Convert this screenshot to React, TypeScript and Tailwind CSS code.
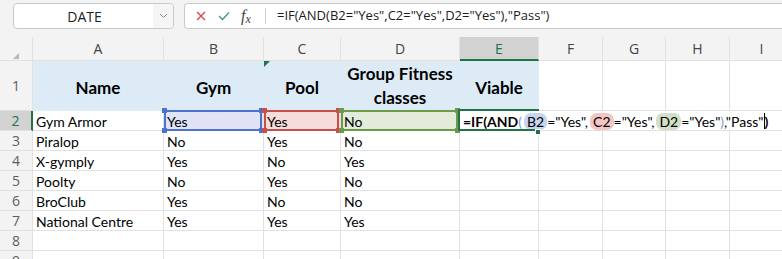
import React from "react";

const COLS = ["A", "B", "C", "D", "E", "F", "G", "H", "I"];

const data: string[][] = [
  ["Piralop", "No", "Yes", "No"],
  ["X-gymply", "Yes", "No", "Yes"],
  ["Poolty", "No", "Yes", "No"],
  ["BroClub", "Yes", "No", "No"],
  ["National Centre", "Yes", "Yes", "Yes"],
  ["", "", "", ""],
  ["", "", "", ""],
];

function RangeBox({ color }: { color: string }) {
  return (
    <div className="absolute left-0 top-[-1px] right-[1px] bottom-[-1px] z-10 pointer-events-none">
      <div className="absolute inset-0 border-2" style={{ borderColor: color }} />
      <div className="absolute left-[-2px] top-[-2px] w-[5px] h-[5px]" style={{ background: color }} />
      <div className="absolute right-[-2px] top-[-2px] w-[5px] h-[5px]" style={{ background: color }} />
      <div className="absolute left-[-2px] bottom-[-2px] w-[5px] h-[5px]" style={{ background: color }} />
      <div className="absolute right-[-2px] bottom-[-2px] w-[5px] h-[5px]" style={{ background: color }} />
    </div>
  );
}

const cell = "border-r border-b border-[#e1e1e1] bg-white flex items-center pl-[3px] pt-[1px] text-[14px] text-black whitespace-nowrap overflow-hidden";
const rowHdr = "border-r border-b border-[#e1e1e1] bg-[#f3f3f3] flex items-center justify-center text-[14px] text-[#5e5e5e]";
const hdr = "bg-[#ddebf7] border-r border-b border-[#ddebf7] flex items-center justify-center pt-[4px] font-bold text-[17px] text-black";
const pill = "inline-block h-[17px] leading-[17px] px-[3px] rounded-[7px]";

export default function App() {
  return (
    <div className="w-[782px] h-[259px] overflow-hidden bg-[#f3f3f3] font-['Lato',sans-serif]">
      {/* Top bar */}
      <div className="h-[37px] flex pt-[3px] font-['Open_Sans',sans-serif]">
        <div className="shrink-0 ml-[13px] w-[161px] h-[26px] rounded-[4px] border border-[#c9c9c9] bg-white flex overflow-hidden">
          <div className="flex-1 flex items-center justify-center text-[14px] text-[#222] pl-[2px]">DATE</div>
          <div className="w-[20px] bg-[#f5f5f5] flex items-center justify-center">
            <svg width="9" height="6" viewBox="0 0 9 6">
              <path d="M1 1 L4.5 4.5 L8 1" stroke="#8a8a8a" strokeWidth="1" fill="none" />
            </svg>
          </div>
        </div>
        <div className="shrink-0 ml-[10px] w-[620px] h-[26px] rounded-l-[4px] border border-r-0 border-[#c9c9c9] bg-white flex items-center">
          <div className="w-[31px] flex justify-center pl-[1px]">
            <svg width="10" height="10" viewBox="0 0 10 10">
              <path d="M1 1 L9 9 M9 1 L1 9" stroke="#d6424e" strokeWidth="1.3" fill="none" />
            </svg>
          </div>
          <div className="w-[15px] flex justify-center">
            <svg width="12" height="10" viewBox="0 0 12 10">
              <path d="M1 5 L4.5 8.5 L11 1.5" stroke="#3d9a62" strokeWidth="1.3" fill="none" />
            </svg>
          </div>
          <div className="w-[30px] flex justify-center items-center font-['Liberation_Serif',serif] italic text-[#444] text-[16px] leading-none">
            <span>f</span>
            <span className="text-[12px] mt-[6px]">x</span>
          </div>
          <div className="w-px h-[16px] bg-[#d0d0d0] ml-[4px]" />
          <div className="pl-[11px] text-[13px] text-[#1b1b1b] whitespace-nowrap">=IF(AND(B2="Yes",C2="Yes",D2="Yes"),"Pass")</div>
        </div>
      </div>

      {/* Sheet grid */}
      <div className="grid grid-cols-[33px_131px_100px_77px_119px_79px_64px_63px_64px_64px] grid-rows-[24px_50px_repeat(8,20px)]">
        {/* column headers */}
        <div className="border-r border-b border-[#e1e1e1] bg-[#f3f3f3] relative">
          <div className="absolute right-[13px] bottom-[1px] w-0 h-0 border-l-[6px] border-l-transparent border-b-[6px] border-b-[#b8b8b8]" />
        </div>
        {COLS.map((c) =>
          c === "E" ? (
            <div key={c} className="border-r border-[#e1e1e1] bg-[#d2d2d2] border-b-2 border-b-[#217346] flex items-center justify-center text-[14px] text-[#217346] font-['Open_Sans',sans-serif]">
              {c}
            </div>
          ) : (
            <div key={c} className="border-r border-b border-[#e1e1e1] bg-[#f3f3f3] flex items-center justify-center text-[14px] text-[#444] font-['Open_Sans',sans-serif]">
              {c}
            </div>
          )
        )}

        {/* Row 1 */}
        <div className={rowHdr + " font-['Open_Sans',sans-serif]"}>1</div>
        <div className={hdr}>Name</div>
        <div className={hdr}>Gym</div>
        <div className={hdr + " relative"}>
          <div className="absolute left-0 top-0 w-0 h-0 border-t-[6px] border-t-[#217346] border-r-[6px] border-r-transparent" />
          Pool
        </div>
        <div className="bg-[#ddebf7] border-r border-b border-[#ddebf7] flex items-center justify-center text-center font-bold text-[17px] leading-[24px] text-black">
          Group Fitness
          <br />
          classes
        </div>
        <div className={hdr}>Viable</div>
        <div className={cell} />
        <div className={cell} />
        <div className={cell} />
        <div className={cell} />

        {/* Row 2 */}
        <div className="border-r-2 border-r-[#217346] border-b border-b-[#e1e1e1] bg-[#d2d2d2] flex items-center justify-center text-[14px] text-[#217346] font-['Open_Sans',sans-serif]">2</div>
        <div className={cell}>Gym Armor</div>
        <div className={cell + " relative overflow-visible !bg-[#dfe3f5]"}>
          Yes
          <RangeBox color="#4c72cc" />
        </div>
        <div className={cell + " relative overflow-visible !bg-[#f6dcdb]"}>
          Yes
          <RangeBox color="#c8504c" />
        </div>
        <div className={cell + " relative overflow-visible !bg-[#e3ebdb]"}>
          No
          <RangeBox color="#6a9a4a" />
        </div>
        <div className="col-span-5 relative border-b border-[#e1e1e1] bg-white flex items-center pl-[3px] pt-[1px] text-[14px] text-black whitespace-nowrap">
          <div className="absolute left-[-2px] top-[-2px] w-[81px] h-[22px] border-2 border-r-0 border-[#217346] z-10" />
          <div className="absolute left-[75px] top-[18px] w-[6px] h-[6px] bg-[#217346] border border-white z-20" />
          <span className="font-bold">=IF(AND</span>
          <span className="text-[#7b9cd6]">(</span>
          <span className={pill + " ml-[2px] bg-[#c8d4ef]"}>B2</span>
          <span>="Yes",</span>
          <span className={pill + " ml-[2px] bg-[#f3c6c3]"}>C2</span>
          <span>="Yes",</span>
          <span className={pill + " ml-[2px] bg-[#d2dfc7]"}>D2</span>
          <span>="Yes"</span>
          <span className="text-[#7b9cd6]">)</span>
          <span>,"Pass"</span>
          <span className="inline-block w-px h-[16px] bg-black" />
          <span className="font-bold">)</span>
        </div>

        {/* Rows 3+ */}
        {data.map((r, i) => (
          <React.Fragment key={i}>
            <div className={rowHdr + " font-['Open_Sans',sans-serif]"}>{i + 3}</div>
            {r.map((v, j) => (
              <div key={j} className={cell}>
                {v}
              </div>
            ))}
            <div className={cell} />
            <div className={cell} />
            <div className={cell} />
            <div className={cell} />
            <div className={cell} />
          </React.Fragment>
        ))}
      </div>
    </div>
  );
}
